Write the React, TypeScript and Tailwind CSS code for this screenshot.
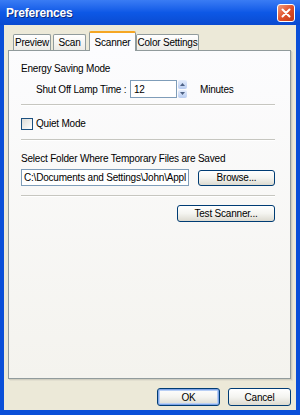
import React from "react";

const font = { fontFamily: '"Liberation Sans", Arial, sans-serif' };
const T = "text-[10px] tracking-[-0.2px] text-black whitespace-nowrap";

function XPButton({ children, className = "", def = false }: { children: React.ReactNode; className?: string; def?: boolean }) {
  return (
    <div
      className={
        "flex items-center justify-center rounded-[3px] border border-[#003c74] bg-gradient-to-b from-[#ffffff] via-[#f4f4f0] to-[#dcdad0] " +
        T +
        " " +
        (def ? "shadow-[inset_0_0_0_1px_#7fa4e6,inset_0_0_0_2px_#b8cff5] " : "") +
        className
      }
    >
      {children}
    </div>
  );
}

function Sep() {
  return <div className="h-[2px] border-t border-[#c6c6c0] border-b border-b-white" />;
}

function Tab({ children, w, className = "" }: { children: React.ReactNode; w: string; className?: string }) {
  return (
    <div
      className={
        "h-[16px] flex items-center justify-center border border-[#919b9c] border-b-0 rounded-t-[2px] bg-gradient-to-b from-white to-[#ecebe6] " +
        T +
        " " +
        w +
        " " +
        className
      }
    >
      {children}
    </div>
  );
}

export default function App() {
  return (
    <div className="w-[300px] h-[415px] flex flex-col bg-[#0a4fd8] overflow-hidden" style={font}>
      {/* Title bar */}
      <div className="h-[25px] flex items-center justify-between pl-[6px] pr-[5px] bg-gradient-to-b from-[#3a7cf4] via-[#0d58e6] to-[#0a4ad0]">
        <span className="text-white font-bold text-[12px] tracking-[-0.2px] [text-shadow:1px_1px_0_#0a2a80]">Preferences</span>
        <div className="w-[18px] h-[18px] rounded-[3px] border border-white bg-gradient-to-br from-[#f09a7a] via-[#e0502a] to-[#c23a16] flex items-center justify-center">
          <svg width="10" height="10" viewBox="0 0 10 10">
            <path d="M1.5 1.5 L8.5 8.5 M8.5 1.5 L1.5 8.5" stroke="white" strokeWidth="2" strokeLinecap="round" />
          </svg>
        </div>
      </div>
      {/* Body */}
      <div className="flex-1 mx-[4px] mb-[5px] bg-[#ece9d8] flex flex-col px-[4px] pt-[6px]">
        {/* Tabs */}
        <div className="flex items-end pl-[5px] h-[19px] relative z-10">
          <Tab w="w-[38px]">Preview</Tab>
          <Tab w="w-[33px]" className="ml-[2px]">Scan</Tab>
          <div className={"h-[20px] w-[47px] ml-[3px] mb-[-1px] flex items-center justify-center border border-[#919b9c] border-b-0 border-t-[2px] border-t-[#f5a623] rounded-t-[2px] bg-[#fcfcfe] " + T}>Scanner</div>
          <Tab w="w-[63px]">Color Settings</Tab>
        </div>
        {/* Panel */}
        <div className="w-[283px] h-[329px] border border-[#919b9c] bg-gradient-to-b from-[#fcfcfe] to-[#f4f3ee] shadow-[1px_1px_0_#d0cec0,2px_2px_0_#e2dfd0] pl-[12px] pr-[15px] pt-[11px]">
          <div className={"leading-[13px] " + T}>Energy Saving Mode</div>
          <div className="flex items-center mt-[5px] h-[18px]">
            <span className={"ml-[15px] w-[94px] " + T}>Shut Off Lamp Time :</span>
            <div className={"w-[47px] h-[18px] border border-[#7f9db9] bg-white flex items-center pl-[3px] " + T}>12</div>
            <div className="ml-[1px] w-[9px] h-[18px] flex flex-col gap-[1px]">
              <div className="flex-1 rounded-[2px] bg-gradient-to-b from-[#e6eefc] to-[#b8ccf0] flex items-center justify-center">
                <svg width="5" height="3" viewBox="0 0 5 3"><path d="M0 3 L2.5 0 L5 3Z" fill="#4d6185" /></svg>
              </div>
              <div className="flex-1 rounded-[2px] bg-gradient-to-b from-[#e6eefc] to-[#b8ccf0] flex items-center justify-center">
                <svg width="5" height="3" viewBox="0 0 5 3"><path d="M0 0 L2.5 3 L5 0Z" fill="#4d6185" /></svg>
              </div>
            </div>
            <span className={"ml-[13px] " + T}>Minutes</span>
          </div>
          <div className="mt-[6px]"><Sep /></div>
          <div className="flex items-center mt-[11px] h-[13px]">
            <div className="w-[12px] h-[12px] border border-[#1c5180] bg-gradient-to-br from-[#dcdcd7] to-white" />
            <span className={"ml-[3px] " + T}>Quiet Mode</span>
          </div>
          <div className="mt-[9px]"><Sep /></div>
          <div className={"leading-[13px] mt-[11px] " + T}>Select Folder Where Temporary Files are Saved</div>
          <div className="flex items-center mt-[4px] h-[17px]">
            <div className={"w-[168px] h-[17px] border border-[#7f9db9] bg-white flex items-center pl-[2px] overflow-hidden " + T}>C:\Documents and Settings\John\Appl</div>
            <XPButton className="ml-[9px] w-[77px] h-[16px]">Browse...</XPButton>
          </div>
          <div className="mt-[9px]"><Sep /></div>
          <div className="flex justify-end mt-[8px]">
            <XPButton className="w-[98px] h-[17px]">Test Scanner...</XPButton>
          </div>
        </div>
        {/* Bottom buttons */}
        <div className="flex justify-end gap-[8px] mt-[9px] pr-[1px]">
          <XPButton def className="w-[63px] h-[18px]">OK</XPButton>
          <XPButton className="w-[63px] h-[18px]">Cancel</XPButton>
        </div>
      </div>
    </div>
  );
}
